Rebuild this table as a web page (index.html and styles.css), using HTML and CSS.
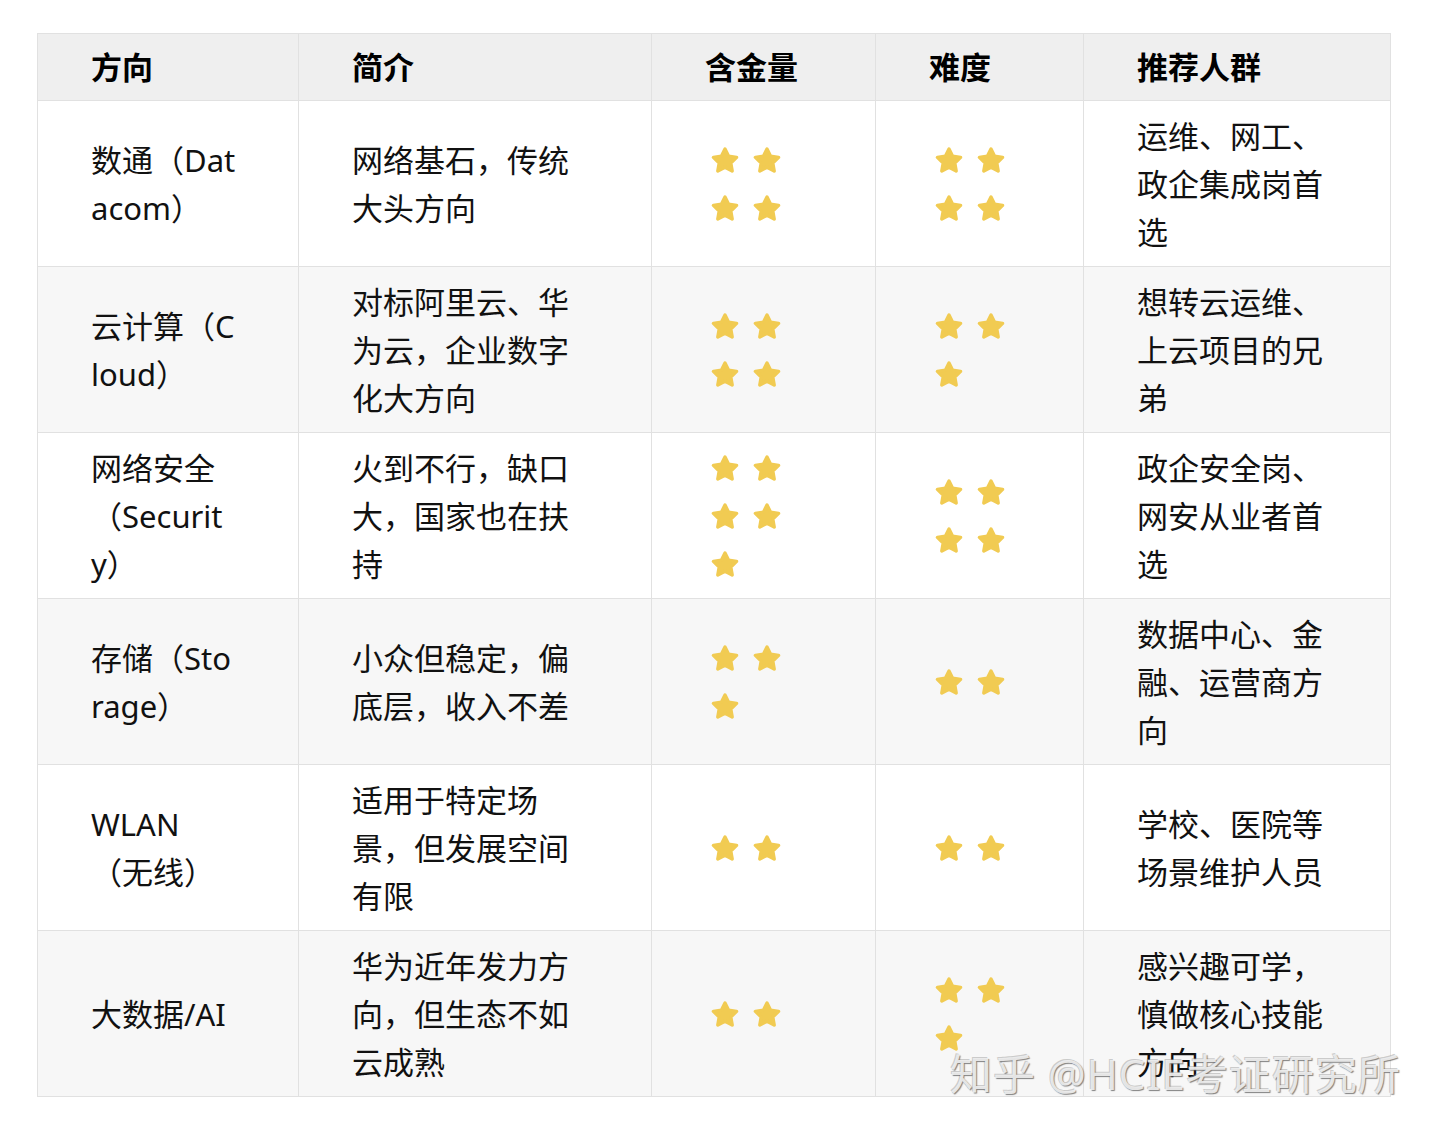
FILE: index.html
```html
<!DOCTYPE html>
<html lang="zh-CN">
<head>
<meta charset="utf-8">
<title>方向对比</title>
<link rel="stylesheet" href="styles.css">
</head>
<body>
<svg width="0" height="0" class="defs" aria-hidden="true">
  <defs>
    <symbol id="star" viewBox="0 0 30 28">
      <polygon points="15,3 18.6,10.3 26.6,11.4 20.8,17 22.2,25 15,21.2 7.8,25 9.2,17 3.4,11.4 11.4,10.3" fill="#f1cb52" stroke="#f1cb52" stroke-width="3.4" stroke-linejoin="round"/>
    </symbol>
  </defs>
</svg>
<main class="page">
  <table class="grid">
    <colgroup>
      <col class="c1"><col class="c2"><col class="c3"><col class="c4"><col class="c5">
    </colgroup>
    <thead>
      <tr><th>方向</th><th>简介</th><th>含金量</th><th>难度</th><th>推荐人群</th></tr>
    </thead>
    <tbody>
      <tr>
        <td>数通（Datacom）</td>
        <td>网络基石，传统大头方向</td>
        <td><div class="stars" data-n="4"></div></td>
        <td><div class="stars" data-n="4"></div></td>
        <td>运维、网工、政企集成岗首选</td>
      </tr>
      <tr>
        <td>云计算（Cloud）</td>
        <td>对标阿里云、华为云，企业数字化大方向</td>
        <td><div class="stars" data-n="4"></div></td>
        <td><div class="stars" data-n="3"></div></td>
        <td>想转云运维、上云项目的兄弟</td>
      </tr>
      <tr>
        <td>网络安全（Security）</td>
        <td>火到不行，缺口大，国家也在扶持</td>
        <td><div class="stars" data-n="5"></div></td>
        <td><div class="stars" data-n="4"></div></td>
        <td>政企安全岗、网安从业者首选</td>
      </tr>
      <tr>
        <td>存储（Storage）</td>
        <td>小众但稳定，偏底层，收入不差</td>
        <td><div class="stars" data-n="3"></div></td>
        <td><div class="stars" data-n="2"></div></td>
        <td>数据中心、金融、运营商方向</td>
      </tr>
      <tr>
        <td>WLAN（无线）</td>
        <td>适用于特定场景，但发展空间有限</td>
        <td><div class="stars" data-n="2"></div></td>
        <td><div class="stars" data-n="2"></div></td>
        <td>学校、医院等场景维护人员</td>
      </tr>
      <tr>
        <td>大数据/AI</td>
        <td>华为近年发力方向，但生态不如云成熟</td>
        <td><div class="stars" data-n="2"></div></td>
        <td><div class="stars" data-n="3"></div></td>
        <td>感兴趣可学，慎做核心技能方向</td>
      </tr>
    </tbody>
  </table>
  <div class="watermark">知乎 @HCIE考证研究所</div>
</main>
<script src="app.js"></script>
</body>
</html>
```

FILE: app.js
```js
document.querySelectorAll('.stars').forEach(function (el) {
  var n = parseInt(el.getAttribute('data-n'), 10);
  var html = '';
  for (var i = 0; i < n; i++) {
    html += '<span class="star"><svg width="30" height="28"><use href="#star"/></svg></span>';
  }
  el.innerHTML = html;
});
```

FILE: styles.css
```css
html, body {
  margin: 0;
  padding: 0;
  background: #ffffff;
}

.defs {
  position: absolute;
  width: 0;
  height: 0;
}

.page {
  position: relative;
  padding: 33px 0 0 37px;
  font-family: "Noto Sans", "Noto Sans CJK SC", sans-serif;
  color: #111111;
}

.grid {
  border-collapse: collapse;
  table-layout: fixed;
  width: 1353px;
  font-size: 31px;
  line-height: 48px;
}

.c1 { width: 261px; }
.c2 { width: 353px; }
.c3 { width: 224px; }
.c4 { width: 208px; }
.c5 { width: 307px; }

.grid th,
.grid td {
  border: 1px solid #e1e1e1;
  padding: 11px 53px 10px 53px;
  text-align: left;
  vertical-align: middle;
  word-break: break-all;
}

.grid td:first-child {
  padding-right: 59px;
}

.grid th {
  background: #efefef;
  font-weight: 700;
  color: #000000;
  padding-top: 9px;
  padding-bottom: 9px;
}

.grid tbody tr:nth-child(even) td {
  background: #f7f7f7;
}

.stars {
  display: flex;
  flex-wrap: wrap;
}

.star {
  width: 42px;
  height: 48px;
  box-sizing: border-box;
  padding-left: 5px;
  display: flex;
  align-items: center;
}

.star svg {
  display: block;
}

.watermark {
  position: absolute;
  left: 950px;
  top: 1046px;
  font-size: 42px;
  line-height: 56px;
  letter-spacing: 1px;
  color: rgba(240, 240, 240, 0.92);
  text-shadow: 1px 1px 1px rgba(90, 90, 90, 0.75), -1px -1px 0 rgba(160, 160, 160, 0.5);
  white-space: nowrap;
}
```
